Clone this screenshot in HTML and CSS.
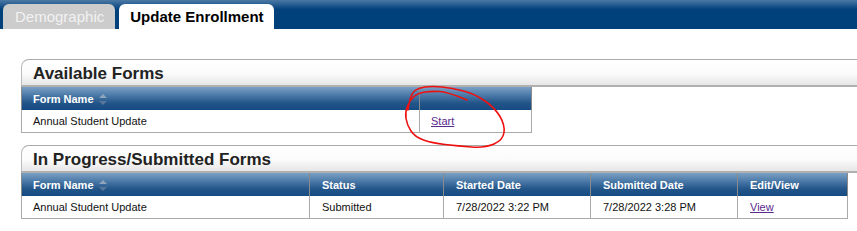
FILE: index.html
```html
<!DOCTYPE html>
<html lang="en">
<head>
    <meta charset="UTF-8">
    <meta name="viewport" content="width=device-width, initial-scale=1.0">
    <title>Update Enrollment</title>
    <link rel="stylesheet" href="styles.css">
</head>
<body>
    <div class="tabbar">
        <div class="tab">Demographic</div>
        <div class="tab active">Update Enrollment</div>
    </div>

    <div class="content">
        <div class="panel">
            <div class="panel-title">Available Forms</div>
            <table class="grid available">
                <thead>
                    <tr>
                        <th class="c-name">Form Name <span class="sort"></span></th>
                        <th class="c-action"></th>
                    </tr>
                </thead>
                <tbody>
                    <tr>
                        <td>Annual Student Update</td>
                        <td><a href="#">Start</a></td>
                    </tr>
                </tbody>
            </table>
        </div>

        <div class="panel">
            <div class="panel-title">In Progress/Submitted Forms</div>
            <table class="grid progress">
                <thead>
                    <tr>
                        <th class="c-name2">Form Name <span class="sort"></span></th>
                        <th class="c-status">Status</th>
                        <th class="c-date">Started Date</th>
                        <th class="c-date">Submitted Date</th>
                        <th class="c-edit">Edit/View</th>
                    </tr>
                </thead>
                <tbody>
                    <tr>
                        <td>Annual Student Update</td>
                        <td>Submitted</td>
                        <td>7/28/2022 3:22 PM</td>
                        <td>7/28/2022 3:28 PM</td>
                        <td><a href="#">View</a></td>
                    </tr>
                </tbody>
            </table>
        </div>
    </div>

    <!-- hand drawn marker around the Start link -->
    <svg class="scribble" width="857" height="231" viewBox="0 0 857 231">
        <path d="M408,110 Q410,95 414,91.5 Q418,88 425,87 Q432,86 442,87 Q452,88 463.5,91 Q475,94 485,101 Q495,108 500,116.5 Q505,125 504,132.5 Q503,140 494,144 Q485,148 471.5,147 Q458,146 445,144.5 Q432,143 423.5,140 Q415,137 411,131 Q407,125 406,118.5 Q405,112 407.5,106 Q410,100 414,96.5 Q418,93 425,92 Q432,91 440,91.5 Q448,92 467,100"/>
    </svg>
</body>
</html>
```

FILE: styles.css
```css
body {
    margin: 0;
    font-family: "Liberation Sans", Arial, sans-serif;
    background-color: #ffffff;
    overflow: hidden;
    position: relative;
}
.tabbar {
    height: 29px;
    background: linear-gradient(to bottom, #4b79a5 0px, #0d4982 8px, #00407b 10px, #00407b 100%);
    display: flex;
    align-items: flex-end;
    gap: 4px;
    padding-left: 3px;
}
.tab {
    height: 25px;
    line-height: 25px;
    padding: 0 11px 0 12px;
    border-radius: 6px 6px 0 0;
    background-color: #cccccc;
    color: #f2f2f2;
    font-size: 15px;
}
.tab.active {
    background-color: #ffffff;
    color: #000000;
    font-weight: bold;
    padding: 0 10px 0 11px;
}
.content {
    padding: 30px 0 0 21px;
}
.panel {
    width: 900px;
    margin-bottom: 12px;
}
.panel-title {
    height: 25px;
    line-height: 27px;
    padding-left: 11px;
    border-top: 1px solid #aaaaaa;
    border-left: 1px solid #bbbbbb;
    border-bottom: 2px solid #b0b0b0;
    border-radius: 8px 0 0 0;
    background: linear-gradient(to bottom, #ffffff 0%, #fbfbfb 55%, #e6e6e6 100%);
    color: #222222;
    font-size: 17px;
    font-weight: bold;
}
.grid {
    border-collapse: collapse;
    font-size: 11px;
    border-left: 1px solid #aaaaaa;
}
.grid th {
    height: 23px;
    padding: 0 0 0 11px;
    text-align: left;
    color: #ffffff;
    font-weight: bold;
    background: linear-gradient(to bottom, #7ba0c5 0%, #4c7aa8 35%, #225589 70%, #154b82 100%);
    border-right: 1px solid #8a8a8a;
    border-left: 1px solid #8a8a8a;
    vertical-align: middle;
}
.grid td {
    height: 22px;
    padding: 0 0 0 11px;
    color: #111111;
    border: 1px solid #aaaaaa;
    border-top: none;
    vertical-align: middle;
}
.grid a {
    color: #5a2a8e;
    text-decoration: underline;
}
.sort {
    display: inline-block;
    width: 8px;
    height: 11px;
    margin-left: 2px;
    vertical-align: -2px;
    position: relative;
}
.sort::before,
.sort::after {
    content: "";
    position: absolute;
    left: 0;
    border-left: 4px solid transparent;
    border-right: 4px solid transparent;
}
.sort::before {
    top: 0;
    border-bottom: 4px solid #8ea4bb;
}
.sort::after {
    bottom: 0;
    border-top: 4px solid #56769a;
}
.c-name { width: 386px; }
.c-action { width: 100px; }
.c-name2 { width: 276px; }
.c-status { width: 121px; }
.c-date { width: 134px; }
.c-edit { width: 97px; }
.progress th:not(:first-child),
.progress td:not(:first-child) {
    padding-left: 12px;
}
.scribble {
    position: absolute;
    left: 0;
    top: 0;
    pointer-events: none;
}
.scribble path {
    fill: none;
    stroke: #ee1111;
    stroke-width: 1.6;
    stroke-linecap: round;
    stroke-linejoin: round;
}
```
